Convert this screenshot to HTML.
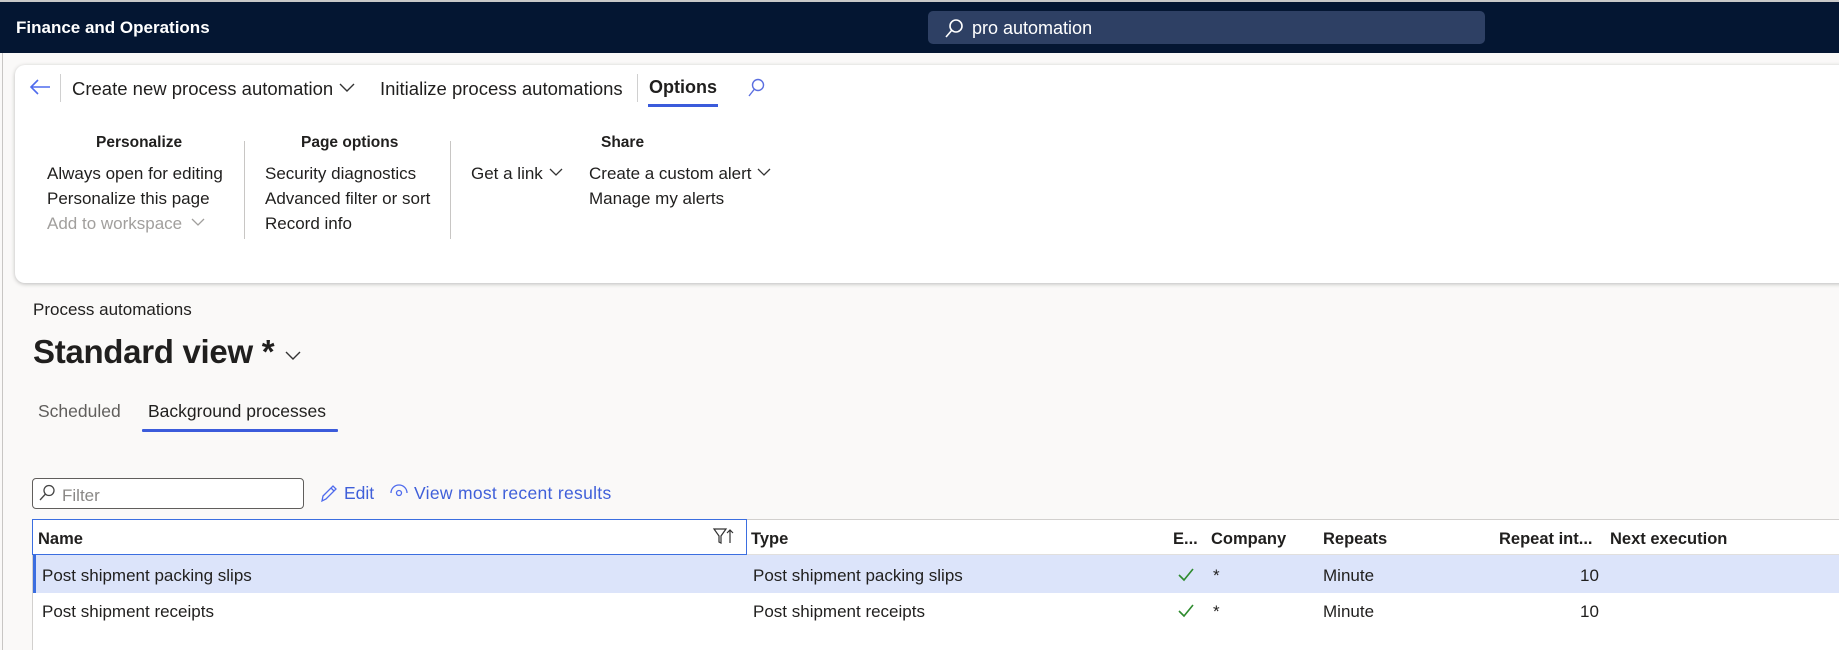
<!DOCTYPE html>
<html><head><meta charset="utf-8"><style>
*{margin:0;padding:0;box-sizing:border-box}
body{width:1839px;height:650px;overflow:hidden;background:#faf9f8;font-family:"Liberation Sans",sans-serif;color:#201f1e;position:relative}
.a{position:absolute;white-space:nowrap}
.hdr{position:absolute;left:0;top:0;width:1839px;height:53px;background:#041632;border-top:2px solid #c8c8c8}
.f17{font-size:17px}
.blue{color:#3f5fd9}
.h{font-size:16.5px;font-weight:bold;top:530px}
</style></head><body>
<div class="hdr"></div>
<div class="a" style="left:16px;top:18px;color:#fff;font-weight:bold;font-size:17px">Finance and Operations</div>
<div class="a" style="left:928px;top:11px;width:557px;height:33px;background:#2e4064;border-radius:5px"></div>
<svg class="a" style="left:943px;top:17px" width="22" height="22" viewBox="0 0 22 22"><circle cx="13" cy="9" r="6" fill="none" stroke="#fff" stroke-width="1.6"/><path d="M9 13 L3 20" stroke="#fff" stroke-width="1.6"/></svg>
<div class="a" style="left:972px;top:18px;color:#fff;font-size:18px">pro automation</div>
<div class="a" style="left:2px;top:53px;width:1px;height:597px;background:#c8c6c4"></div>
<div class="a" style="left:15px;top:65px;width:1840px;height:218px;background:#fff;border-radius:10px;box-shadow:0 1px 4px rgba(0,0,0,.25)"></div>
<svg class="a" style="left:28px;top:77px" width="24" height="20" viewBox="0 0 24 20"><path d="M22 10H3M10 3L3 10l7 7" fill="none" stroke="#4f6bed" stroke-width="1.6"/></svg>
<div class="a" style="left:60px;top:74px;width:1px;height:28px;background:#d0d0d0"></div>
<div class="a" style="left:72px;top:78px;font-size:18.5px">Create new process automation</div>
<svg class="a" style="left:339px;top:83px" width="16" height="10"><path d="M1 1l7 7 7-7" fill="none" stroke="#333" stroke-width="1.4"/></svg>
<div class="a" style="left:380px;top:78px;font-size:18.5px">Initialize process automations</div>
<div class="a" style="left:637px;top:74px;width:1px;height:28px;background:#d0d0d0"></div>
<div class="a" style="left:649px;top:77px;font-size:18px;font-weight:bold">Options</div>
<div class="a" style="left:648px;top:104px;width:70px;height:3px;background:#3b5bdb"></div>
<svg class="a" style="left:745px;top:77px" width="22" height="22" viewBox="0 0 22 22"><circle cx="13" cy="8" r="5.5" fill="none" stroke="#5a6ee0" stroke-width="1.4"/><path d="M9.5 12 L4 19" stroke="#5a6ee0" stroke-width="1.4"/></svg>
<div class="a" style="left:96px;top:134px;font-size:15.5px;font-weight:bold">Personalize</div>
<div class="a f17" style="left:47px;top:164px">Always open for editing</div>
<div class="a f17" style="left:47px;top:189px">Personalize this page</div>
<div class="a f17" style="left:47px;top:214px;color:#a19f9d">Add to workspace</div>
<svg class="a" style="left:191px;top:218px" width="14" height="9"><path d="M1 1l6 6 6-6" fill="none" stroke="#a19f9d" stroke-width="1.3"/></svg>
<div class="a" style="left:244px;top:141px;width:1px;height:98px;background:#c8c6c4"></div>
<div class="a" style="left:301px;top:134px;font-size:15.5px;font-weight:bold">Page options</div>
<div class="a f17" style="left:265px;top:164px">Security diagnostics</div>
<div class="a f17" style="left:265px;top:189px">Advanced filter or sort</div>
<div class="a f17" style="left:265px;top:214px">Record info</div>
<div class="a" style="left:450px;top:141px;width:1px;height:98px;background:#c8c6c4"></div>
<div class="a f17" style="left:471px;top:164px">Get a link</div>
<svg class="a" style="left:549px;top:168px" width="14" height="9"><path d="M1 1l6 6 6-6" fill="none" stroke="#333" stroke-width="1.3"/></svg>
<div class="a" style="left:601px;top:134px;font-size:15.5px;font-weight:bold">Share</div>
<div class="a f17" style="left:589px;top:164px">Create a custom alert</div>
<svg class="a" style="left:757px;top:168px" width="14" height="9"><path d="M1 1l6 6 6-6" fill="none" stroke="#333" stroke-width="1.3"/></svg>
<div class="a f17" style="left:589px;top:189px">Manage my alerts</div>
<div class="a f17" style="left:33px;top:300px">Process automations</div>
<div class="a" style="left:33px;top:333px;font-size:33px;font-weight:bold;letter-spacing:-0.3px">Standard view *</div>
<svg class="a" style="left:285px;top:351px" width="16" height="10"><path d="M1 1l7 7 7-7" fill="none" stroke="#333" stroke-width="1.4"/></svg>
<div class="a" style="left:38px;top:401px;color:#605e5c;font-size:17.5px">Scheduled</div>
<div class="a" style="left:148px;top:401px;font-size:17.5px">Background processes</div>
<div class="a" style="left:142px;top:429px;width:196px;height:3px;background:#3b5bdb;border-radius:1px"></div>
<div class="a" style="left:32px;top:478px;width:272px;height:31px;border:1px solid #605e5c;border-radius:4px;background:#fff"></div>
<svg class="a" style="left:37px;top:483px" width="20" height="20" viewBox="0 0 20 20"><circle cx="12" cy="7.5" r="5" fill="none" stroke="#444" stroke-width="1.3"/><path d="M8.5 11 L3 17" stroke="#444" stroke-width="1.3"/></svg>
<div class="a f17" style="left:62px;top:486px;color:#8a8886">Filter</div>
<svg class="a" style="left:319px;top:482px" width="20" height="22" viewBox="0 0 20 22"><path d="M3 19l1-5L14 4l3 3L7 17z M12 6l3 3" fill="none" stroke="#4f6bed" stroke-width="1.3"/></svg>
<div class="a blue" style="left:344px;top:483px;font-size:17.5px">Edit</div>
<svg class="a" style="left:389px;top:483px" width="20" height="18" viewBox="0 0 20 18"><path d="M2 10a8 8 0 0 1 16 0" fill="none" stroke="#4f6bed" stroke-width="1.3"/><circle cx="10" cy="10" r="2.5" fill="none" stroke="#4f6bed" stroke-width="1.3"/></svg>
<div class="a blue" style="left:414px;top:483px;font-size:17.5px;letter-spacing:0.3px">View most recent results</div>
<div class="a" style="left:32px;top:519px;width:1807px;height:131px;background:#fff;border-top:1px solid #d2d0ce;border-left:1px solid #d2d0ce"></div>
<div class="a" style="left:32px;top:554px;width:1807px;height:1px;background:#e1dfdd"></div>
<div class="a" style="left:32px;top:519px;width:715px;height:36px;border:1.5px solid #3b6ee0"></div>
<div class="a h" style="left:38px">Name</div>
<svg class="a" style="left:712px;top:527px" width="22" height="20" viewBox="0 0 22 20"><path d="M2 2h12l-5 7v7l-2-1V9z" fill="none" stroke="#333" stroke-width="1.2"/><path d="M18 16V3M15 6l3-3 3 3" fill="none" stroke="#333" stroke-width="1.2"/></svg>
<div class="a h" style="left:751px">Type</div>
<div class="a h" style="left:1173px">E...</div>
<div class="a h" style="left:1211px">Company</div>
<div class="a h" style="left:1323px">Repeats</div>
<div class="a h" style="left:1499px">Repeat int...</div>
<div class="a h" style="left:1610px">Next execution</div>
<div class="a" style="left:33px;top:555px;width:1806px;height:38px;background:#dce4fa"></div>
<div class="a" style="left:33px;top:555px;width:3px;height:38px;background:#3b6ee0"></div>
<div class="a f17" style="left:42px;top:566px">Post shipment packing slips</div>
<div class="a f17" style="left:753px;top:566px">Post shipment packing slips</div>
<div class="a f17" style="left:42px;top:602px">Post shipment receipts</div>
<div class="a f17" style="left:753px;top:602px">Post shipment receipts</div>
<svg class="a" style="left:1177px;top:567px" width="18" height="16"><path d="M2 8l5 5 9-11" fill="none" stroke="#2e8b2e" stroke-width="1.6"/></svg>
<svg class="a" style="left:1177px;top:603px" width="18" height="16"><path d="M2 8l5 5 9-11" fill="none" stroke="#2e8b2e" stroke-width="1.6"/></svg>
<div class="a f17" style="left:1213px;top:566px">*</div>
<div class="a f17" style="left:1213px;top:602px">*</div>
<div class="a f17" style="left:1323px;top:566px">Minute</div>
<div class="a f17" style="left:1323px;top:602px">Minute</div>
<div class="a f17" style="left:1580px;top:566px">10</div>
<div class="a f17" style="left:1580px;top:602px">10</div>
</body></html>
